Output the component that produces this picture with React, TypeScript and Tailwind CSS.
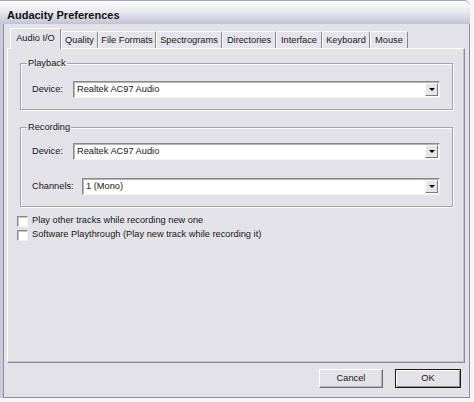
import React from "react";

const TABS = [
  { label: "Audio I/O", cls: "w-[51px]" },
  { label: "Quality", cls: "w-[37px]" },
  { label: "File Formats", cls: "w-[58px]" },
  { label: "Spectrograms", cls: "w-[66px]" },
  { label: "Directories", cls: "w-[54px]" },
  { label: "Interface", cls: "w-[46px]" },
  { label: "Keyboard", cls: "w-[48px]" },
  { label: "Mouse", cls: "w-[38px]" },
];

function Combo({ value }: { value: string }) {
  return (
    <div className="flex h-[17px] flex-1 items-stretch border border-t-[#8a8a8e] border-l-[#8a8a8e] border-r-[#f4f4f6] border-b-[#f4f4f6] bg-white shadow-[inset_1px_1px_0_#b4b4b8]">
      <span className="flex flex-1 items-center pl-[3px] pt-[1px] text-[9.25px] leading-none">{value}</span>
      <span className="my-[1px] mr-[1px] flex w-[13px] items-center justify-center border border-t-[#fafafa] border-l-[#fafafa] border-r-[#7c7c80] border-b-[#7c7c80] bg-[#e6e5ea]">
        <span className="h-0 w-0 border-x-[3px] border-t-[3px] border-x-transparent border-t-black" />
      </span>
    </div>
  );
}

function Group({ title, children, className }: { title: string; children: React.ReactNode; className: string }) {
  return (
    <fieldset className={`mx-[12px] mr-[11px] border border-[#a3a3ab] pl-[11px] pr-[12px] shadow-[inset_1px_1px_0_#fbfbfc,1px_1px_0_#fbfbfc] ${className}`}>
      <legend className="-ml-[5px] h-[12px] bg-[#e3e2e8] px-[1px] text-[9.25px] leading-[12px]">{title}</legend>
      {children}
    </fieldset>
  );
}

function Check({ label }: { label: string }) {
  return (
    <div className="flex h-[14px] items-center">
      <span className="h-[11px] w-[11px] border border-t-[#8a8a8e] border-l-[#8a8a8e] border-r-[#f4f4f6] border-b-[#f4f4f6] bg-white shadow-[inset_1px_1px_0_#c4c4c8]" />
      <span className="ml-[4px] text-[9.25px] leading-none">{label}</span>
    </div>
  );
}

export default function App() {
  return (
    <div className="h-[402px] w-[474px] bg-[#f6f6f8] font-['Liberation_Sans',Arial,sans-serif] text-[#161616]">
      <div className="flex h-[398px] w-[470px] flex-col rounded-tr-[6px] bg-[#cbcbd6]">
        {/* title bar */}
        <div className="h-[24px] shrink-0 rounded-tr-[6px] border-t border-[#a4a4b6] bg-gradient-to-b from-[#fdfdfe] via-[#e6e6ee] to-[#c2c2d6] pl-[7px] pt-[9px] text-[11px] font-bold leading-none text-[#111]">
          Audacity Preferences
        </div>

        <div className="ml-[3px] flex flex-1 flex-col border-x border-b border-[#8a8aa2] bg-[#e3e2e8] pt-[4px] pb-[9px]">
          {/* tabs */}
          <div className="ml-[6px] flex h-[20px] items-end">
            {TABS.map((t, i) =>
              i === 0 ? (
                <div
                  key={t.label}
                  className={`${t.cls} relative z-10 -mb-[1px] flex h-[21px] items-start justify-center rounded-t-[2px] border border-b-0 border-l-white border-t-white border-r-[#8c8c96] bg-[#e3e2e8] pt-[5px] text-[9.25px] leading-none`}
                >
                  {t.label}
                </div>
              ) : (
                <div
                  key={t.label}
                  className={`${t.cls} flex h-[17px] items-center justify-center rounded-t-[2px] border border-b-0 border-l-[#fbfbfc] border-t-[#fbfbfc] border-r-[#86868f] bg-[#e5e4ea] pt-[1px] text-[9.25px] leading-none`}
                >
                  {t.label}
                </div>
              )
            )}
          </div>

          {/* panel */}
          <div className="ml-[3px] mr-[4px] flex h-[315px] shrink-0 flex-col border border-l-white border-t-white border-r-[#8c8c96] border-b-[#8c8c96] bg-[#e3e2e8] shadow-[inset_-1px_-1px_0_#c2c2ca]">
            <Group title="Playback" className="mt-[8px] pt-[12px] pb-[11px]">
              <div className="flex items-center">
                <span className="w-[41px] text-[9.25px] leading-none">Device:</span>
                <Combo value="Realtek AC97 Audio" />
              </div>
            </Group>

            <Group title="Recording" className="mt-[11px] pt-[10px] pb-[11px]">
              <div className="flex items-center">
                <span className="w-[41px] text-[9.25px] leading-none">Device:</span>
                <Combo value="Realtek AC97 Audio" />
              </div>
              <div className="mt-[18px] flex items-center">
                <span className="w-[50px] text-[9.25px] leading-none">Channels:</span>
                <Combo value="1 (Mono)" />
              </div>
            </Group>

            <div className="ml-[9px] mt-[7px] flex flex-col">
              <Check label="Play other tracks while recording new one" />
              <Check label="Software Playthrough (Play new track while recording it)" />
            </div>
          </div>

          {/* buttons */}
          <div className="mt-[6px] flex justify-end gap-[12px] pr-[8px]">
            <button className="flex h-[19px] w-[64px] items-center justify-center border border-l-white border-t-white border-r-[#6e6e76] border-b-[#6e6e76] bg-[#e3e2e8] text-[9.25px] leading-none shadow-[inset_-1px_-1px_0_#b4b4bc]">
              Cancel
            </button>
            <button className="flex h-[19px] w-[66px] items-center justify-center border border-[#1a1a1a] bg-[#e3e2e8] text-[9.25px] leading-none shadow-[inset_1px_1px_0_#fff,inset_-1px_-1px_0_#8a8a92]">
              OK
            </button>
          </div>
        </div>
      </div>
    </div>
  );
}
